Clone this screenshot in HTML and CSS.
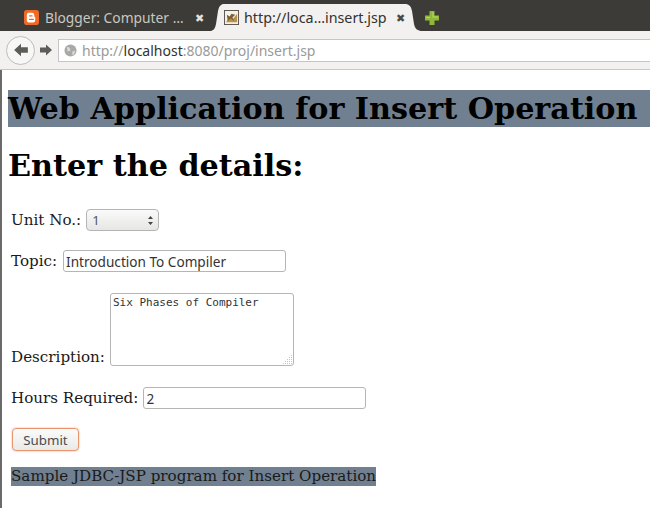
FILE: index.html
```html
<!DOCTYPE html>
<html lang="en">
<head>
<meta charset="utf-8">
<title>insert.jsp</title>
<link rel="stylesheet" href="styles.css">
</head>
<body>
<div class="chrome">
  <div class="tabstrip">
    <div class="tab">
      <svg class="favicon" viewBox="0 0 16 16"><rect x="0" y="0" width="16" height="16" rx="3" fill="#f06a25"/><path d="M5 3h3.500a2.500 2.500 0 0 1 2.500 2.500V7l1 .8v3a2.500 2.500 0 0 1-2.500 2.500h-4.500a2 2 0 0 1-2-2V5a2 2 0 0 1 2-2z" fill="#fff"/><path d="M6 6.300h2.500M6 10h4" stroke="#f06a25" stroke-width="1.500" stroke-linecap="round"/></svg>
      <span class="tab-title dim">Blogger: Computer …</span>
      <span class="close light">✖</span>
    </div>
    <div class="active-tab">
      <svg class="flare-left" viewBox="0 0 14 27"><path d="M0 27C3 27 5 25 6 20L8 7C9 2 11 0 14 0V27z" fill="#f2f1f0"/></svg>
      <div class="tab-body">
        <svg class="favicon" viewBox="0 0 16 16"><rect x=".5" y=".5" width="15" height="15" fill="#f4f1e8" stroke="#55504a"/><path d="M2 13l4-5 3 2 5-6v9z" fill="#b9924f"/><path d="M3 5l3 2 2-3 4 1-3 3 2 4-4-3-3 3z" fill="#7d5f33"/></svg>
        <span class="tab-title">http://loca…insert.jsp</span>
        <span class="close">✖</span>
      </div>
      <svg class="flare-right" viewBox="0 0 17 27"><path d="M0 0C4 0 6 2 7 7L9 20C10 25 13 27 17 27H0z" fill="#f2f1f0"/></svg>
    </div>
    <svg class="newtab" viewBox="0 0 16 16"><path d="M5.500 1h5v4.500H15v5h-4.500V15h-5v-4.500H1v-5h4.500z" fill="#8fb83a"/><path d="M6.500 2h3v4.500H14v1H8.500V2zM2 7h4v1H2z" fill="#b6d95f"/></svg>
  </div>
  <div class="toolbar">
    <div class="nav">
      <span class="back"><svg viewBox="0 0 14 14"><path d="M7 1.500L1 7l6 5.500V9.500h6v-5H7z" fill="#5c5c58"/></svg></span>
      <svg class="forward" viewBox="0 0 14 14"><path d="M7 1.500L13 7l-6 5.500V9.500H1v-5h6z" fill="#5c5c58"/></svg>
    </div>
    <div class="omnibox">
      <svg class="globe" viewBox="0 0 14 14"><circle cx="7" cy="7" r="6.500" fill="#a9a9a7"/><path d="M3 3l3 1 1 3-3 1zM9 8l3-1-1 4-2 1z" fill="#dcdcda"/></svg>
      <span class="url">http://<b>localhost</b>:8080/proj/insert.jsp</span>
    </div>
  </div>
</div>
<main class="page">
  <h1 class="banner">Web Application for Insert Operation</h1>
  <h1 class="subtitle">Enter the details:</h1>
  <form class="form">
    <div class="row row-unit">
      <label>Unit No.:</label>
      <div class="select"><span>1</span><svg class="spin" viewBox="0 0 7 11"><path d="M3.500 1L6 4H1zM3.500 10L1 7h5z" fill="#444"/></svg></div>
    </div>
    <div class="row row-topic">
      <label>Topic:</label>
      <input class="field" type="text" value="Introduction To Compiler">
    </div>
    <div class="row row-desc">
      <label>Description:</label>
      <div class="area-wrap">
        <textarea class="area">Six Phases of Compiler</textarea>
        <svg class="grip" viewBox="0 0 11 11"><path d="M9 1h1v1H9zM7 3h1v1H7zM9 3h1v1H9zM5 5h1v1H5zM7 5h1v1H7zM9 5h1v1H9zM3 7h1v1H3zM5 7h1v1H5zM7 7h1v1H7zM9 7h1v1H9zM1 9h1v1H1zM3 9h1v1H3zM5 9h1v1H5zM7 9h1v1H7zM9 9h1v1H9z" fill="#c4c4c2"/></svg>
      </div>
    </div>
    <div class="row row-hours">
      <label>Hours Required:</label>
      <input class="field" type="text" value="2">
    </div>
    <div class="row row-submit">
      <button class="submit" type="button">Submit</button>
    </div>
  </form>
  <p class="foot"><span>Sample JDBC-JSP program for Insert Operation</span></p>
</main>
</body>
</html>
```
FILE: styles.css
```css
* { box-sizing: border-box; }
html, body { margin: 0; height: 100%; overflow: hidden; background: #fff; }
body { width: 650px; height: 508px; font-family: "DejaVu Serif", serif; color: #000; }

.chrome { font-family: "Noto Sans", sans-serif; }
.tabstrip { height: 31px; background: #3c3b37; display: flex; align-items: flex-end; overflow: hidden; }
.tab { width: 210px; height: 27px; padding: 0 6px 0 24px; display: flex; align-items: center; flex: none; }
.favicon { width: 15px; height: 15px; flex: none; }
.tab-title { font-size: 14.300px; color: #33322e; margin-left: 5px; white-space: nowrap; flex: 1; }
.tab-title.dim { font-size: 13.800px; margin-left: 6px; color: #c9c7c1; }
.close { font-size: 11px; color: #4a4a46; flex: none; }
.close.light { color: #e4e2dc; }
.active-tab { display: flex; height: 27px; flex: none; width: 212px; }
.flare-left { width: 14px; height: 27px; flex: none; display: block; }
.flare-right { width: 17px; height: 27px; flex: none; display: block; }
.tab-body { flex: 1; background: #f2f1f0; display: flex; align-items: center; min-width: 0; }
.newtab { width: 16px; height: 16px; margin: 0 0 5px 2px; flex: none; align-self: flex-end; }

.toolbar { height: 39px; background: #f2f1f0; border-bottom: 1px solid #c9c8c6; display: flex; align-items: center; padding-left: 6px; }
.nav { display: flex; align-items: center; flex: none; width: 52px; }
.back { width: 29px; height: 29px; border-radius: 50%; background: #f7f7f6; border: 1px solid #bdbcba; display: flex; align-items: center; justify-content: center; }
.back svg { width: 16px; height: 16px; }
.forward { width: 14px; height: 14px; margin-left: 4px; }
.omnibox { flex: 1; height: 23px; background: #fff; border: 1px solid #c6c5c3; border-right: 0; display: flex; align-items: center; padding-left: 5px; }
.globe { width: 13px; height: 13px; flex: none; }
.url { font-size: 14px; color: #9a9a98; margin-left: 5px; white-space: nowrap; }
.url b { font-weight: 400; color: #33322e; }

.page { height: 438px; border-left: 2px solid #6a6a6a; padding: 20px 0 0 6px; }
.banner { margin: 0; font-size: 30.240px; line-height: 37px; font-weight: 700; background: #708090; white-space: nowrap; }
.subtitle { margin: 20px 0 0 0; font-size: 30.240px; line-height: 37px; font-weight: 700; white-space: nowrap; }

.form { padding-left: 3px; font-size: 15.130px; color: #1a1a1a; }
.row { display: flex; align-items: flex-end; gap: 5px; line-height: 18px; }
.row-unit { margin-top: 24px; height: 24px; align-items: center; }
.row-topic { margin-top: 17px; height: 24px; align-items: center; gap: 6px; }
.row-desc { margin-top: 20px; }
.row-hours { margin-top: 20px; height: 24px; align-items: center; }
.row-submit { margin-top: 18px; padding-left: 1px; }

.select { width: 73px; height: 22px; border: 1px solid #b5b5b3; border-radius: 4px; background: linear-gradient(#fafafa, #e6e6e4); font: 13px "Noto Sans", sans-serif; color: #555; display: flex; align-items: center; justify-content: space-between; padding: 0 4px 0 5px; }
.spin { width: 7px; height: 11px; }
.field { width: 223px; height: 22px; border: 1px solid #b5b5b3; border-radius: 3px; padding: 0 2px; font: 13.600px "Noto Sans", sans-serif; color: #333; background: #fff; outline: 0; }
.area-wrap { position: relative; width: 184px; height: 73px; }
.area { width: 184px; height: 73px; display: block; border: 1px solid #b5b5b3; border-radius: 3px; padding: 2px; font: 11px/14px "DejaVu Sans Mono", monospace; color: #333; background: #fff; outline: 0; resize: none; margin: 0; }
.grip { position: absolute; right: 1px; bottom: 1px; width: 11px; height: 11px; }
.submit { width: 67px; height: 23px; border: 1px solid #e8946c; border-radius: 4px; box-shadow: 0 0 2px #f0a580; background: linear-gradient(#fbfbfb, #e9e9e7); font: 13.300px "Noto Sans", sans-serif; color: #4c4c4c; padding: 0; }

.foot { margin: 16px 0 0 3px; font-size: 15.130px; line-height: 19px; color: #1a1a1a; }
.foot span { background: #708090; display: inline-block; }
```
